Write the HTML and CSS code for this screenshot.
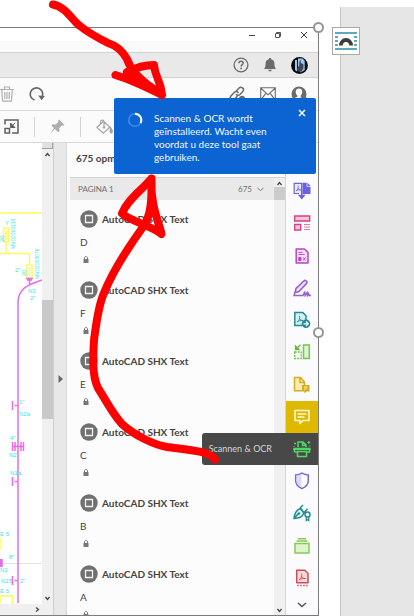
FILE: index.html
```html
<!DOCTYPE html>
<html lang="nl">
<head>
    <meta charset="UTF-8">
    <meta name="viewport" content="width=device-width, initial-scale=1.0">
    <title>Scannen &amp; OCR</title>
    <link rel="stylesheet" href="styles.css">
</head>
<body>
    <div class="page">
        <div class="window">
            <div class="titlebar">
                <button class="win-btn" aria-label="Minimaliseren"><svg width="10" height="10" viewBox="0 0 10 10"><path d="M2 5.5h6" stroke="#444" fill="none"/></svg></button>
                <button class="win-btn" aria-label="Verkleinen"><svg width="10" height="10" viewBox="0 0 10 10"><path d="M2.5 3.5h4v4h-4zM3.500 3.500v-1h4v4h-1" stroke="#555" fill="none"/></svg></button>
                <button class="win-btn" aria-label="Sluiten"><svg width="10" height="10" viewBox="0 0 10 10"><path d="M2 2l6 6M8 2l-6 6" stroke="#444" fill="none"/></svg></button>
            </div>
            <div class="menu-strip"></div>
            <div class="account-bar">
                <button aria-label="Help"><svg width="16" height="16" viewBox="0 0 16 16"><circle cx="8" cy="8" r="6.900" fill="none" stroke="#6b6b6b" stroke-width="1.300"/><path d="M5.900 6.300c0-2.900 4.300-2.800 4.300-.2 0 1.500-2.100 1.600-2.100 3.300" fill="none" stroke="#6b6b6b" stroke-width="1.500"/><circle cx="8.100" cy="11.400" r=".9" fill="#6b6b6b"/></svg></button>
                <button aria-label="Meldingen"><svg width="16" height="16" viewBox="0 0 16 16"><path d="M8 1c.8 0 1.200.5 1.200 1.200C11.500 2.800 12.400 4.500 12.400 6.500c0 3 .5 3.900 1.600 5.500H2c1.100-1.600 1.600-2.500 1.600-5.500 0-2 .9-3.700 3.200-4.300C6.800 1.500 7.200 1 8 1zM6.300 12.700h3.400c0 2.300-3.400 2.300-3.400 0z" fill="#6b6b6b"/></svg></button>
                <button aria-label="Profiel"><svg width="17" height="17" viewBox="0 0 17 17"><circle cx="8.500" cy="8.500" r="8.400" fill="#080a0e"/><path d="M4 3h2v11.400l-2-1.500zM7 1.500h4.700l2 2.500v9l-4 2.500-2.700-4z" fill="#9cc7ea"/><path d="M8.500 4l1-1 .4 3 2.500 1.300v4l-2 3.500-3.700-.4-1-2.400 2.500-3.500z" fill="#3f4552"/></svg></button>
            </div>
            <div class="toolbar toolbar-main">
                <button aria-label="Verwijderen"><svg width="14" height="16" viewBox="0 0 14 16"><path d="M0 3.500h14M4.500 3V1h5v2M1.700 4l.9 11.200h8.800L12.300 4M4.800 6v7M7 6v7M9.200 6v7" fill="none" stroke="#b0b0b0" stroke-width="1.200"/></svg></button>
                <button aria-label="Roteren"><svg width="16" height="16" viewBox="0 0 16 16"><path d="M5.500 14A6.200 6.200 0 1 1 13.200 10.500" fill="none" stroke="#666" stroke-width="1.600"/><path d="M9.300 9.500l6.500.5-3.300 4.300z" fill="#666"/></svg></button>
                <span class="spacer"></span>
                <button aria-label="Koppeling"><svg width="16" height="16" viewBox="0 0 16 16"><path d="M6.500 6l3.500-4c2.200-2 5.700.5 4 3.200l-3 3.300c-1.300 1.200-3.300.9-4-.3M9.500 7C8.200 4.900 6.500 5.300 5.200 6.500L1.700 10.300c-1.800 2.700 1.500 5 3.500 3.200L8.500 10" fill="none" stroke="#6b6b6b" stroke-width="1.500"/><circle cx="13" cy="12.800" r="3" fill="#6b6b6b"/></svg></button>
                <button aria-label="E-mail"><svg width="16" height="16" viewBox="0 0 16 16"><path d="M.7 1.700h14.600v12.300H.7zM.7 2L8 8.800 15.300 2M.9 13.800L6 7.200M15.100 13.800L10 7.200" fill="none" stroke="#6b6b6b" stroke-width="1.100"/></svg></button>
                <button aria-label="Delen"><svg width="16" height="16" viewBox="0 0 16 16"><circle cx="8" cy="8" r="7.500" fill="#6b6b6b"/><path d="M8 2.500c4 0 4 5 1.700 7v1.200l4.300 2V16H2v-3.300l4.300-2V9.500C4 7.500 4 2.500 8 2.500z" fill="#fbfbfb"/><path d="M12.500 9v6M9.500 12h6" stroke="#6b6b6b" stroke-width="1.500"/></svg></button>
            </div>
            <div class="toolbar toolbar-edit">
                <button aria-label="Passend maken"><svg width="15" height="15" viewBox="0 0 15 15"><path d="M1 5.500V1h13v13H8" fill="none" stroke="#606060" stroke-width="1.500"/><path d="M1 9.500h4.500V14H1z" fill="none" stroke="#606060" stroke-width="1.500"/><path d="M6.500 4v4.500H11zM8 7l3.200-3.200" fill="#606060" stroke="#606060"/></svg></button>
                <span class="separator"></span>
                <button aria-label="Vastmaken"><svg width="15" height="15" viewBox="0 0 15 15"><path d="M9 .5l5.500 5.500-1.500.8-1.200-.4-2.600 2.800.3 2.800-1.300 1.200-3.300-3.300L.7 14.300l3.200-5.200L1.500 6.500l1.300-1.300 2.800.3 2.800-2.600L8 2z" fill="#aeaeae"/></svg></button>
                <span class="separator"></span>
                <button aria-label="Opvulkleur"><svg width="18" height="16" viewBox="0 0 18 16"><path d="M1 8.500L7.500 2l6.300 6.200L7.300 14.300zM4.500 5.500V3c0-2.500 3.500-2.500 3.500 0v5" fill="none" stroke="#a5a5a5" stroke-width="1.200"/><circle cx="8" cy="8.500" r="1.200" fill="#a5a5a5"/><path d="M14 7c2 2.500 3.500 4.500 2.800 6.500-.8 1.700-3.500 1-3.300-.9z" fill="#a5a5a5"/></svg></button>
            </div>

            <div class="workspace">
                <div class="document">
                    <div class="drawing">
                        <svg class="cad" width="42" height="461" viewBox="0 143 42 461">
                            <g fill="none" stroke="#fbfb5c" stroke-width="1.500">
                                <path d="M0 213h42M0 253.500h29.500V265M6 243v10M3.500 228h5v14h-5zM6 230v10M27 265h5v13h-5zM29.500 267v9M0 538v10h1M0 596h12.500v8M0 597v6"/>
                            </g>
                            <path d="M0 563.500h42" stroke="#e2e2e2"/>
                            <g fill="none" stroke="#e86be8" stroke-width="1.500">
                                <path d="M26 278.500h7M27 280h5M29.500 280v4M42 280c-14 5-24 8-24 23v300"/>
                                <path d="M12.500 401v9M14.500 405.500h3M12.500 442v9M15 442v9M21 442v9M23.500 442v9M12.500 446.500h11M12.500 477v9M14.500 481.500h3M.5 559v8M2 559v8M12.500 576v9M14.500 580.500h3"/>
                            </g>
                            <g class="cad-text">
                                <text class="tag" transform="translate(15 249) rotate(-90)">MVD2203118</text>
                                <text class="tag" transform="translate(39 279) rotate(-90)">MVD2203076</text>
                                <text transform="translate(4 242) rotate(-90)">20</text>
                                <text x="5" y="225">Y</text>
                                <text transform="translate(26 276) rotate(-90)">20</text>
                                <text x="15" y="272">2"</text>
                                <text x="28" y="293">N3</text>
                                <text x="30" y="300">2"</text>
                                <text x="19" y="404">1"</text>
                                <text x="19" y="416">N2a</text>
                                <text x="10" y="440">4"</text>
                                <text x="9" y="457">N2</text>
                                <text x="10" y="475">N1a</text>
                                <text x="0" y="536">E 5</text>
                                <text x="9" y="559">8"</text>
                                <text x="0" y="572">N1</text>
                                <text x="1" y="583">N15</text>
                                <text x="20" y="583">2"</text>
                                <text x="0" y="593">E 5</text>
                            </g>
                        </svg>
                        <div class="vscroll">
                            <span class="split-box"></span>
                            <svg class="scroll-arrow" width="7" height="7" viewBox="0 0 7 7"><path d="M1.500 5l2-2.500 2 2.500" fill="none" stroke="#444" stroke-width="1.300"/></svg>
                            <span class="thumb"></span>
                            <svg class="scroll-arrow" width="7" height="7" viewBox="0 0 7 7"><path d="M1.500 2l2 2.500 2-2.500" fill="none" stroke="#444" stroke-width="1.300"/></svg>
                        </div>
                    </div>
                    <div class="hscroll"><svg width="7" height="7" viewBox="0 0 7 7"><path d="M2 1.500l2.500 2-2.500 2" fill="none" stroke="#444" stroke-width="1.300"/></svg></div>
                </div>
                <button class="splitter" aria-label="Deelvenster"><svg width="5" height="8" viewBox="0 0 5 8"><path d="M.5 0l4.500 4-4.500 4z" fill="#666"/></svg></button>

                <div class="comments">
                    <h2>675 opmerkingen</h2>
                    <div class="comments-body">
                        <div class="comments-list">
                            <button class="page-row">
                                <span>PAGINA 1</span>
                                <span class="count">675</span>
                                <svg width="7" height="5" viewBox="0 0 7 5"><path d="M.5 1l3 2.500 3-2.500" fill="none" stroke="#777"/></svg>
                            </button>
                            <div id="items"></div>
                        </div>
                        <div class="list-scroll">
                            <svg class="scroll-arrow" width="7" height="7" viewBox="0 0 7 7"><path d="M1.500 5l2-2.500 2 2.500" fill="none" stroke="#444" stroke-width="1.300"/></svg>
                            <span class="list-thumb"></span>
                            <svg class="scroll-arrow" width="7" height="7" viewBox="0 0 7 7"><path d="M1.500 2l2 2.500 2-2.500" fill="none" stroke="#444" stroke-width="1.300"/></svg>
                        </div>
                    </div>
                </div>

                <nav class="rail">
                    <button class="tool" aria-label="Bestanden combineren"><svg width="18" height="18" viewBox="0 0 18 18"><path d="M9.500 .8h5L17.500 4v8H9.500z" fill="#6a62e0"/><path d="M14 .5V4.500h4" fill="none" stroke="#fff" stroke-width=".7"/><path d="M6 11.500H1.200V1.300h7.500V10" fill="#eceafd" stroke="#6a62e0" stroke-width="1.200"/><path d="M3 9c2-1 2.500-4 2-5.500M5 6c.5 1.500 1.500 2 3 2M3 9c1-1.500 3-1.500 5-1" fill="none" stroke="#6a62e0" stroke-width=".8"/><path d="M8.800 9v5M6.500 13.500l2.300 2.800 2.300-2.800z" fill="#6a62e0" stroke="#6a62e0" stroke-width="1.500"/></svg></button>
                    <button class="tool" aria-label="Pagina's indelen"><svg width="18" height="18" viewBox="0 0 18 18"><path d="M1.700 2h15v5h-15zM1.700 10.500h6v5.500h-6z" fill="#f9c3dc" stroke="#cf4487" stroke-width="1.400"/><path d="M11 10.500h6M11 13h6M11 15.500h6" stroke="#de79aa" stroke-width="1.100"/></svg></button>
                    <button class="tool" aria-label="Formulier"><svg width="18" height="18" viewBox="0 0 18 18"><path d="M3.200 2h8.300L15 5.500V16H3.200z" fill="#f8dcf9" stroke="#b646c2" stroke-width="1.500" stroke-linejoin="round"/><path d="M5.500 5.500h4M5.500 7.500h6" fill="none" stroke="#b646c2" stroke-width=".9"/><path d="M5.700 10.500H8v3H5.700zM10 10.500l2.500 3M12.500 10.500l-2.500 3" fill="#b646c2" stroke="#b646c2" stroke-width=".9"/></svg></button>
                    <button class="tool" aria-label="Invullen en ondertekenen"><svg width="18" height="18" viewBox="0 0 18 18"><path d="M2 13.500l1-4L11 1.800c1.500-1.200 3.800.8 2.700 2.500L6 12.500z" fill="#eadcf8" stroke="#9460cf" stroke-width="1.500"/><path d="M2 13.500L1 16.500h9l1.800-4 .3 4 2-3 .3 3 1.200-2 .4 2H18" fill="none" stroke="#9460cf" stroke-width="1.400"/></svg></button>
                    <button class="tool" aria-label="PDF exporteren"><svg width="18" height="18" viewBox="0 0 18 18"><path d="M9 14.500H1.800V1.500h8L13 4.700V9" fill="#d3eff1" stroke="#248b96" stroke-width="1.500"/><path d="M4 11c2.500-1.500 3-4 2.500-6M6.500 7.500C7.200 9 8.500 9.500 10 9.500M4 11c1.500-1.500 3.500-1.500 6-1.500" fill="none" stroke="#248b96" stroke-width=".9"/><circle cx="13" cy="12.800" r="4.300" fill="#248b96"/><path d="M10.500 12.800h4.500M13 10.500l2.300 2.300-2.300 2.300" fill="none" stroke="#fff" stroke-width="1.200"/></svg></button>
                    <button class="tool" aria-label="Pagina's ordenen"><svg width="18" height="18" viewBox="0 0 18 18"><path d="M10.500 2h5.800v13.500h-5.800z" fill="#def4d4" stroke="#75c64b" stroke-width="1.500"/><path d="M1.700 9h6.500v6.500H1.700z" fill="none" stroke="#75c64b" stroke-width="1.400" stroke-dasharray="2 1"/><path d="M2.500 3v3.500H6zM4 5l3.500-3.300" fill="#65bb3c" stroke="#65bb3c" stroke-width="1.300"/></svg></button>
                    <button class="tool" aria-label="Verzenden ter revisie"><svg width="18" height="18" viewBox="0 0 18 18"><path d="M9 14.800H1.500V1.500h6L11.500 6v3" fill="#f8ecbd" stroke="#d6ac1d" stroke-width="1.500"/><path d="M7 2v4.500h4.500" fill="none" stroke="#d6ac1d" stroke-width="1.500"/><path d="M9 9h7.500v6.500h-3l-2 2v-2H9z" fill="#d6ac1d"/><path d="M11 11h3.500M11 13h2.500" stroke="#fff1b5"/></svg></button>
                    <button class="tool tool-active" aria-label="Opmerking"><svg width="18" height="18" viewBox="0 0 18 18"><path d="M2 2.500h14v10H10l-3 3v-3H2z" fill="none" stroke="#fff9ce" stroke-width="1.600" stroke-linejoin="round"/><path d="M4.500 6h9M4.500 9h7" stroke="#fff9ce" stroke-width="1.500"/></svg></button>
                    <button class="tool tool-hover"><span class="tool-label">Scannen &amp; OCR</span><svg width="18" height="18" viewBox="0 0 18 18"><path d="M5 7V2h5l3 3v2M9.500 2v3.500H13M1.500 12V8.500h15V12h-3M1.500 12h3M4.500 11.500h9v5h-9zM0 9.300h18" fill="none" stroke="#4fd866" stroke-width="1.500"/><path d="M2 2.500v2M1 3.500h2M15.800 1v3M14.300 2.500h3M17 5.500v1M1 6v1" stroke="#4fd866"/></svg></button>
                    <button class="tool" aria-label="Beveiligen"><svg width="18" height="18" viewBox="0 0 18 18"><path d="M9 1.200c2 1.300 4 1.700 6.300 1.700V9c0 4-3 6-6.300 7.700C5.700 15 2.700 13 2.700 9V2.900C5 2.900 7 2.500 9 1.200z" fill="#fff" stroke="#7169da" stroke-width="1.500"/><path d="M8.500 2.300v13.300C5.500 14 3.600 12 3.600 9V3.800c2 0 3.500-.5 4.900-1.500z" fill="#dcd9fb"/></svg></button>
                    <button class="tool" aria-label="Certificaten"><svg width="18" height="18" viewBox="0 0 18 18"><path d="M1 14.500C1.500 8.500 3.500 6 7.500 4.500l3.500 4.300c-1.200 3.500-4.500 5.700-10 5.700zM1 14.500l4.500-5" fill="#dff2f2" stroke="#258c91" stroke-width="1.500"/><path d="M7 4l3-3M7.500 4.500l3.500 4.300 3.500-4" fill="none" stroke="#258c91" stroke-width="1.500"/><circle cx="6" cy="9.500" r="1.200" fill="#258c91"/><circle cx="14.500" cy="10.500" r="2.500" fill="#fff" stroke="#258c91" stroke-width="1.500"/><path d="M13.300 13v3.500l1.200-.7 1.200.7V13" fill="none" stroke="#258c91" stroke-width="1.300"/></svg></button>
                    <button class="tool" aria-label="Archief"><svg width="18" height="18" viewBox="0 0 18 18"><path d="M2 6.500h14v9.500H2z" fill="#dff4cc" stroke="#8ac957" stroke-width="1.500"/><path d="M3.500 4h11M5 1.800h8" stroke="#8ac957" stroke-width="1.500"/></svg></button>
                    <button class="tool" aria-label="PDF-standaarden"><svg width="18" height="18" viewBox="0 0 18 18"><path d="M3.700 1.200h8L15 4.500v9.300H3.700z" fill="#fbd9dc" stroke="#d14b55" stroke-width="1.500" stroke-linejoin="round"/><path d="M6 11c2.300-1.500 3-4 2.800-6.500M8.800 7.500C9.500 9 11 9.500 12.500 9.500M6 11c1.500-1.500 4-1.500 6.500-1.500" fill="none" stroke="#d14b55" stroke-width=".9"/><path d="M4 16.500h11" stroke="#e2777f" stroke-width="1.500" stroke-dasharray="2 1"/></svg></button>
                    <button class="more" aria-label="Meer"><svg width="10" height="6" viewBox="0 0 10 6"><path d="M1 1l4 3.500L9 1" fill="none" stroke="#555" stroke-width="1.500"/></svg></button>
                </nav>
            </div>

            <div class="toast" role="status">
                <svg class="spinner" width="16" height="16" viewBox="0 0 16 16"><circle cx="8" cy="8" r="6.300" fill="none" stroke="#4189e2" stroke-width="1.600"/><path d="M8 1.700a6.300 6.300 0 0 1 5.500 9.300" fill="none" stroke="#fff" stroke-width="2"/></svg>
                <p>Scannen &amp; OCR wordt geïnstalleerd. Wacht even voordat u deze tool gaat gebruiken.</p>
                <button aria-label="Melding sluiten"><svg width="8" height="8" viewBox="0 0 8 8"><path d="M1 1l6 6M7 1L1 7" stroke="#fff" stroke-width="1.500"/></svg></button>
            </div>
            <span class="handle handle-corner"></span>
            <span class="handle handle-side"></span>
        </div>

        <div class="margin-area">
            <button class="layout-options" aria-label="Indelingsopties"><svg width="22" height="18" viewBox="0 0 22 18"><path d="M0 1h22M0 5h3M19 5h3M0 9h3M19 9h3M0 13h3M19 13h3M0 17h22" stroke="#2b8cab" stroke-width="1.300"/><path d="M4 13.500a7 7.500 0 0 1 14 0h-3.800a3.200 3.500 0 0 0-6.400 0z" fill="#3d3d3d"/></svg></button>
        </div>

        <!-- rode pijlen over de schermafdruk -->
        <svg class="arrows" width="414" height="616" viewBox="0 0 414 616">
            <path d="M53 4.500C66 7 72 20 80 26C90 34 98 38 108 43C118 46 123 52 127 59C130 68 136 78 162 95M115.500 75C132 80 148 88 162 95C161 80 155 78 154 65C144 65 135 68 127 72C138 78 150 86 162 95"/>
            <path d="M215 459.500C209 451 190 450 167 447C155 445 135 436 122 424C112 413 107 402 98 388C92 376 93 358 94 340C96 326 98 306 104 293C112 273 130 245 143 227C151 216 152 200 151.500 178.500C142 190 127 200 122 213.500C132 222 150 225 161.500 234C159 222 150 205 151.500 178.500"/>
        </svg>
    </div>

    <script>
        const comments = ['D', 'F', 'E', 'C', 'B', 'A'];

        document.getElementById('items').innerHTML = comments.map(text => `
            <article class="comment">
                <div class="comment-head">
                    <svg width="18" height="18" viewBox="0 0 18 18"><circle cx="9" cy="9" r="8.700" fill="#707070"/><path d="M5.500 5.500h7v7h-7z" fill="none" stroke="#f2f2f2" stroke-width="1.300"/></svg>
                    <h3>AutoCAD SHX Text</h3>
                </div>
                <p>${text}</p>
                <svg class="lock" width="6" height="7" viewBox="0 0 6 7"><path d="M.5 3h5v4h-5z" fill="#777"/><path d="M1.500 3.500V2c0-2 3-2 3 0v1.500" fill="none" stroke="#777"/></svg>
            </article>
        `).join('');
    </script>
</body>
</html>
```
FILE: styles.css
```css
* {
    box-sizing: border-box;
}
body {
    margin: 0;
    background-color: #ffffff;
    color: #444444;
    font-family: Lato, "Open Sans", sans-serif;
    font-size: 10px;
}
button {
    display: flex;
    align-items: center;
    justify-content: center;
    padding: 0;
    border: 0;
    background: none;
    color: inherit;
    font: inherit;
    cursor: pointer;
}
svg {
    display: block;
    flex-shrink: 0;
}
h2, h3, p {
    margin: 0;
}
.page {
    position: relative;
    display: flex;
    gap: 21px;
    height: 100vh;
    overflow: hidden;
}
.window {
    position: relative;
    display: flex;
    flex: 1;
    flex-direction: column;
    min-width: 0;
    margin-top: 27px;
    border: 1px solid #7c7c7c;
    border-left: 0;
}
.titlebar {
    display: flex;
    justify-content: flex-end;
    height: 13px;
    padding-right: 1px;
}
.win-btn {
    width: 26px;
}
.menu-strip {
    height: 11px;
    background-color: #fafafa;
}
.account-bar {
    display: flex;
    align-items: center;
    justify-content: flex-end;
    gap: 13px;
    height: 26px;
    padding-right: 10px;
    background-color: #e9e9e9;
    border-top: 1px solid #d2d2d2;
    border-bottom: 1px solid #d2d2d2;
}
.toolbar {
    display: flex;
    align-items: center;
    background-color: #fbfbfb;
    border-bottom: 1px solid #d9d9d9;
}
.toolbar-main {
    gap: 15px;
    height: 33px;
    padding-right: 11px;
}
.toolbar-edit {
    gap: 15px;
    height: 32px;
    padding-left: 4px;
}
.spacer {
    flex: 1;
}
.separator {
    width: 1px;
    height: 20px;
    background-color: #d4d4d4;
}
.workspace {
    display: flex;
    flex: 1;
    min-height: 0;
}

/* tekening */
.document {
    display: flex;
    flex-direction: column;
    width: 53px;
}
.drawing {
    display: flex;
    flex: 1;
    min-height: 0;
}
.cad-text {
    fill: #35e6e6;
    font-family: "Liberation Sans", sans-serif;
    font-size: 6px;
}
.cad-text .tag {
    font-size: 5px;
}
.vscroll {
    display: flex;
    flex: 1;
    flex-direction: column;
    align-items: center;
    padding-bottom: 2px;
    background-color: #f0f0f0;
}
.split-box {
    width: 100%;
    height: 6px;
    background-color: #e0e0e0;
    border-bottom: 1px solid #a0a0a0;
    border-right: 1px solid #a0a0a0;
}
.scroll-arrow {
    margin-top: 2px;
}
.thumb {
    width: 100%;
    height: 119px;
    margin: 142px 0 auto;
    background-color: #c9c9c9;
}
.hscroll {
    display: flex;
    align-items: center;
    justify-content: flex-end;
    height: 11px;
    padding-right: 12px;
    background-color: #f0f0f0;
}
.splitter {
    width: 14px;
    background-color: #e8e8e8;
    border-left: 1px solid #cfcfcf;
    border-right: 1px solid #d6d6d6;
}

/* opmerkingen */
.comments {
    display: flex;
    flex: 1;
    flex-direction: column;
    min-width: 0;
    padding-left: 3px;
    background-color: #fcfcfc;
}
.comments h2 {
    height: 34px;
    padding-left: 6px;
    font-size: 10px;
    font-weight: 700;
    line-height: 31px;
    white-space: nowrap;
}
.comments-body {
    display: flex;
    flex: 1;
    min-height: 0;
    border-top: 1px solid #d2d2d2;
}
.comments-list {
    flex: 1;
    min-width: 0;
    overflow: hidden;
}
.page-row {
    width: 100%;
    height: 22px;
    padding: 0 10px 0 8px;
    background-color: #e9e9e9;
    color: #707070;
    font-size: 8px;
}
.page-row .count {
    margin: 0 5px 0 auto;
}
.comment {
    height: 71px;
    padding: 10px 10px 0;
}
.comment-head {
    display: flex;
    align-items: center;
    gap: 4px;
}
.comment h3 {
    font-size: 10px;
    font-weight: 700;
    line-height: 18px;
    white-space: nowrap;
}
.comment p {
    margin-top: 7px;
    font-size: 10px;
    line-height: 14px;
}
.lock {
    margin: 7px 0 0 3px;
}
.list-scroll {
    display: flex;
    flex-direction: column;
    align-items: center;
    width: 11px;
    padding-bottom: 1px;
    background-color: #f0f0f0;
}
.list-thumb {
    width: 100%;
    height: 13px;
    margin-bottom: auto;
    background-color: #cbcbcb;
}

/* gereedschappen */
.rail {
    display: flex;
    flex-direction: column;
    width: 33px;
    padding-top: 32px;
    background-color: #fbfbfd;
    border-left: 1px solid #d5d5d5;
}
.tool {
    position: relative;
    flex: 1;
    min-height: 0;
}
.tool-active {
    background-color: #dfb800;
}
.tool-hover {
    background-color: #484848;
}
.tool-label {
    position: absolute;
    top: 0;
    right: 100%;
    bottom: 0;
    display: flex;
    align-items: center;
    padding: 0 14px 0 7px;
    border-radius: 3px 0 0 3px;
    background-color: #484848;
    color: #d6d6d6;
    font-size: 9px;
    white-space: nowrap;
}
.more {
    height: 21px;
}

/* melding */
.toast {
    position: absolute;
    top: 70px;
    right: 2px;
    display: flex;
    align-items: flex-start;
    width: 202px;
    padding: 14px 10px 10px 13px;
    border-radius: 2px;
    background-color: #0b64d2;
    color: #f2f7ff;
}
.toast p {
    flex: 1;
    padding: 0 24px 0 11px;
    font-size: 10px;
    line-height: 13px;
}
.toast button {
    margin-top: -3px;
}

/* selectie */
.handle {
    position: absolute;
    right: -6px;
    width: 11px;
    height: 11px;
    border: 2px solid #969696;
    border-radius: 50%;
    background-color: #ffffff;
}
.handle-corner {
    top: -6px;
}
.handle-side {
    top: 299px;
}
.margin-area {
    position: relative;
    width: 74px;
    margin-top: 7px;
    background-color: #e6e6e6;
    border-left: 1px solid #c3c3c3;
}
.layout-options {
    position: absolute;
    top: 20px;
    left: -9px;
    width: 28px;
    height: 28px;
    background-color: #ffffff;
    border: 1px solid #a8a8a8;
}
.arrows {
    position: absolute;
    top: 0;
    left: 0;
    fill: none;
    stroke: #ff0000;
    stroke-width: 8;
    stroke-linecap: round;
    stroke-linejoin: round;
    pointer-events: none;
}
```
